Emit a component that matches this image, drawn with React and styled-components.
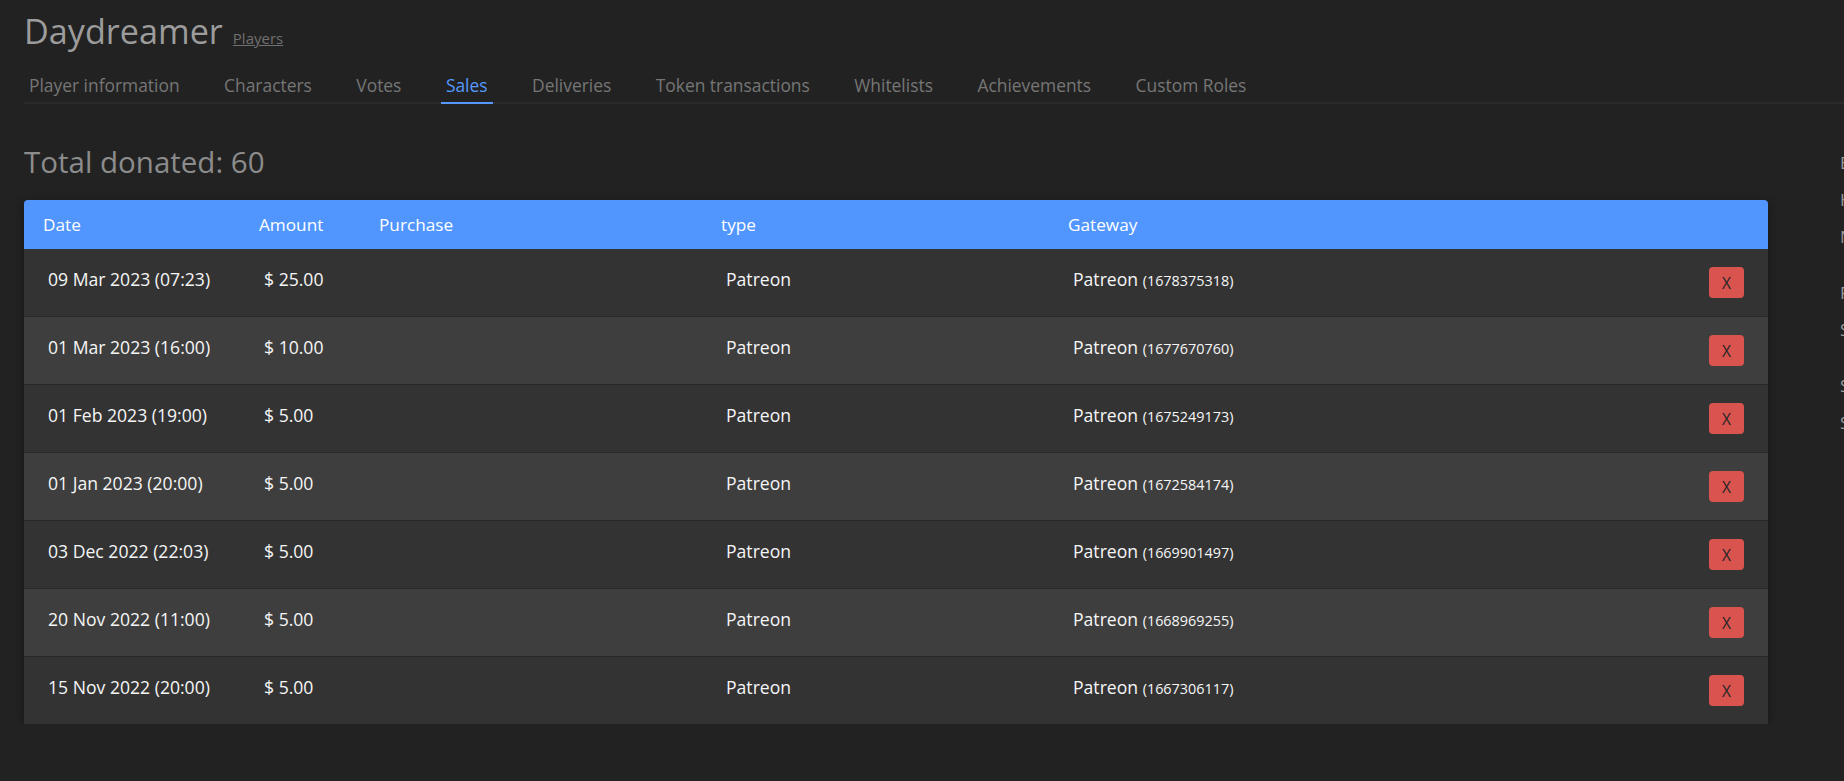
import styled, { createGlobalStyle } from 'styled-components';

const GlobalStyle = createGlobalStyle`
	html, body {
		margin: 0;
		padding: 0;
		background: #222222;
		overflow: hidden;
	}

	body {
		font-family: "Open Sans", "Noto Sans", "Liberation Sans", sans-serif;
		color: #eeeeee;
	}
`;

const SALES = [
	{ date: '09 Mar 2023 (07:23)', amount: '$ 25.00', type: 'Patreon', gateway: 'Patreon', ref: '1678375318' },
	{ date: '01 Mar 2023 (16:00)', amount: '$ 10.00', type: 'Patreon', gateway: 'Patreon', ref: '1677670760' },
	{ date: '01 Feb 2023 (19:00)', amount: '$ 5.00', type: 'Patreon', gateway: 'Patreon', ref: '1675249173' },
	{ date: '01 Jan 2023 (20:00)', amount: '$ 5.00', type: 'Patreon', gateway: 'Patreon', ref: '1672584174' },
	{ date: '03 Dec 2022 (22:03)', amount: '$ 5.00', type: 'Patreon', gateway: 'Patreon', ref: '1669901497' },
	{ date: '20 Nov 2022 (11:00)', amount: '$ 5.00', type: 'Patreon', gateway: 'Patreon', ref: '1668969255' },
	{ date: '15 Nov 2022 (20:00)', amount: '$ 5.00', type: 'Patreon', gateway: 'Patreon', ref: '1667306117' },
];

const TABS = [
	'Player information',
	'Characters',
	'Votes',
	'Sales',
	'Deliveries',
	'Token transactions',
	'Whitelists',
	'Achievements',
	'Custom Roles',
];

// only the first letter of each of these peeks in at the right edge
const SIDE_GROUPS = [
	['Email', 'Hours played', 'Nickname'],
	['Patreon', 'Status'],
	['Since', 'Server'],
];

const COLUMNS = '216px 120px 342px 347px 1fr auto';

const Page = styled.div`
	padding-left: 24px;
	width: 1820px;
`;

const TitleRow = styled.div`
	display: flex;
	align-items: baseline;
	gap: 10px;
	padding-top: 11px;
`;

const Title = styled.h1`
	margin: 0;
	font-size: 34.2px;
	line-height: 40px;
	font-weight: 400;
	color: #9c9c9c;
`;

const Crumb = styled.a`
	font-size: 15px;
	color: #707070;
	text-decoration: underline;
	cursor: pointer;
`;

const TabBar = styled.nav`
	display: flex;
	gap: 34.5px;
	margin-top: 21px;
	border-bottom: 2px solid #2b2b2b;
`;

const Tab = styled.a`
	padding: 0 5px 4px;
	margin-bottom: -2px;
	font-size: 17.4px;
	line-height: 26px;
	color: ${({ $active }) => ($active ? '#5599ff' : '#767676')};
	border-bottom: 2px solid ${({ $active }) => ($active ? '#5599ff' : 'transparent')};
	cursor: pointer;
`;

const Content = styled.div`
	display: flex;
	gap: 72px;
	margin-top: 40px;
`;

const Main = styled.section`
	width: 1744px;
	flex-shrink: 0;
`;

const Total = styled.h3`
	margin: 0 0 20px;
	font-size: 29.5px;
	line-height: 36px;
	font-weight: 400;
	color: #8c8c8c;
`;

const Table = styled.div`
	border-radius: 4px 4px 0 0;
	box-shadow: 0 2px 8px rgba(0, 0, 0, 0.35);
	overflow: hidden;
`;

const HeadRow = styled.div`
	display: grid;
	grid-template-columns: ${COLUMNS};
	align-items: center;
	height: 49px;
	background: #5196ff;
`;

const HeadCell = styled.div`
	padding-left: 19px;
	font-size: 17.2px;
	color: #ffffff;
`;

const Row = styled.div`
	display: grid;
	grid-template-columns: ${COLUMNS};
	align-items: start;
	height: 67px;
	background: ${({ $alt }) => ($alt ? '#3e3e3e' : '#333333')};
	border-top: ${({ $first }) => ($first ? 'none' : '1px solid #282828')};
`;

const Cell = styled.div`
	padding: 17px 0 0 24px;
	font-size: 17.6px;
	line-height: 26px;
	color: #f6f6f6;
	white-space: nowrap;
`;

const Ref = styled.small`
	font-size: 14.4px;
`;

const ActionCell = styled.div`
	align-self: center;
	padding-right: 24px;
`;

const DeleteButton = styled.button`
	display: flex;
	align-items: center;
	justify-content: center;
	width: 35px;
	height: 31px;
	padding: 0;
	border: none;
	border-radius: 4px;
	background: #d9534f;
	color: #262626;
	font-family: inherit;
	font-size: 15.5px;
	cursor: pointer;
`;

const Sidebar = styled.aside`
	display: flex;
	flex-direction: column;
	gap: 30px;
	padding-top: 6px;
	flex-shrink: 0;
`;

const SideGroup = styled.div`
	display: flex;
	flex-direction: column;
	gap: 11px;
`;

const SideItem = styled.div`
	font-size: 17px;
	line-height: 26px;
	color: #9a9a9a;
	white-space: nowrap;
`;

export default function App() {
	return (
		<>
			<GlobalStyle />
			<Page>
				<TitleRow>
					<Title>Daydreamer</Title>
					<Crumb>Players</Crumb>
				</TitleRow>
				<TabBar>
					{TABS.map((tab) => (
						<Tab key={tab} $active={tab === 'Sales'}>{tab}</Tab>
					))}
				</TabBar>
				<Content>
					<Main>
						<Total>Total donated: 60</Total>
						<Table>
							<HeadRow>
								<HeadCell>Date</HeadCell>
								<HeadCell>Amount</HeadCell>
								<HeadCell>Purchase</HeadCell>
								<HeadCell>type</HeadCell>
								<HeadCell>Gateway</HeadCell>
								<HeadCell />
							</HeadRow>
							{SALES.map((sale, i) => (
								<Row key={sale.ref} $alt={i % 2 === 1} $first={i === 0}>
									<Cell>{sale.date}</Cell>
									<Cell>{sale.amount}</Cell>
									<Cell />
									<Cell>{sale.type}</Cell>
									<Cell>
										{sale.gateway} <Ref>({sale.ref})</Ref>
									</Cell>
									<ActionCell>
										<DeleteButton>X</DeleteButton>
									</ActionCell>
								</Row>
							))}
						</Table>
					</Main>
					<Sidebar>
						{SIDE_GROUPS.map((group) => (
							<SideGroup key={group[0]}>
								{group.map((item) => (
									<SideItem key={item}>{item}</SideItem>
								))}
							</SideGroup>
						))}
					</Sidebar>
				</Content>
			</Page>
		</>
	);
}
